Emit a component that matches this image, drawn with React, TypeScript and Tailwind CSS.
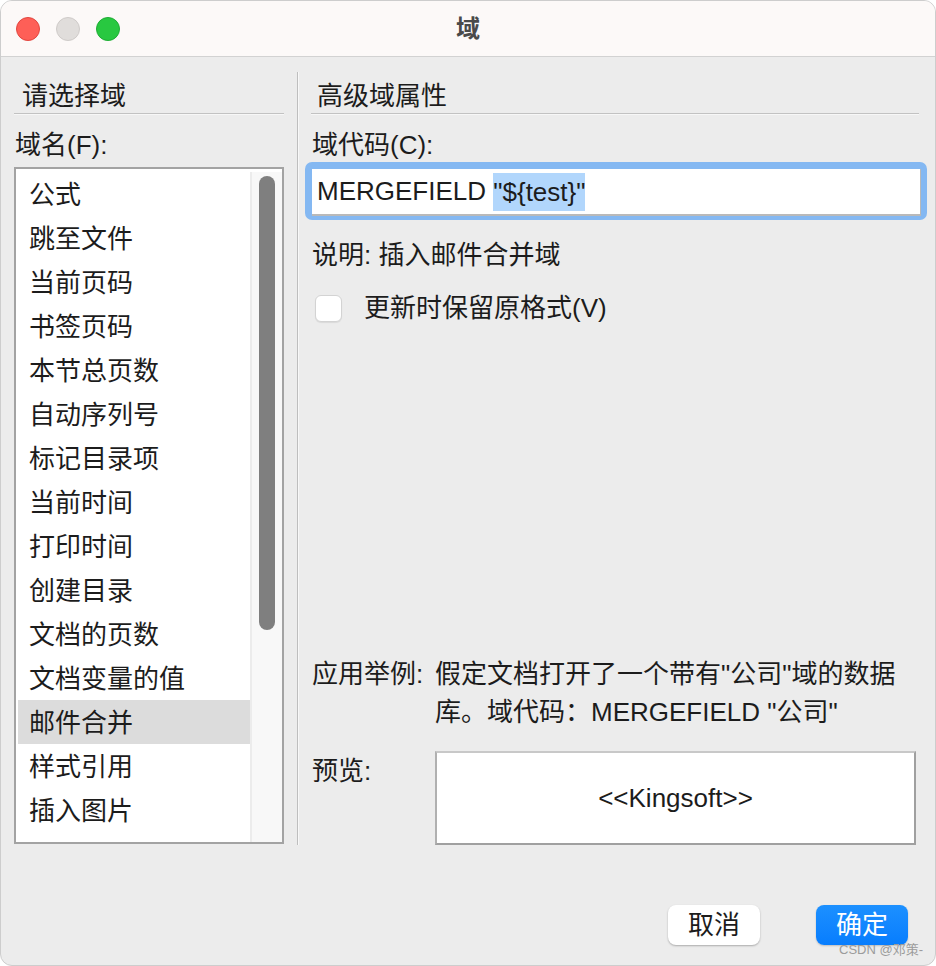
import React from 'react';

const fields = [
  '公式',
  '跳至文件',
  '当前页码',
  '书签页码',
  '本节总页数',
  '自动序列号',
  '标记目录项',
  '当前时间',
  '打印时间',
  '创建目录',
  '文档的页数',
  '文档变量的值',
  '邮件合并',
  '样式引用',
  '插入图片',
];

const SectionTitle: React.FC<{ text: string; indent: string }> = ({ text, indent }) => (
  <div>
    <p className={`h-[30px] leading-[30px] ${indent}`}>{text}</p>
    <div className="mt-[2px] h-px bg-[#c2c2c2]" />
    <div className="h-px bg-[#f7f7f7]" />
  </div>
);

const App: React.FC = () => {
  return (
    <div className="min-h-[966px] bg-white">
      <div className="relative flex h-[966px] w-[936px] flex-col overflow-hidden rounded-[12px] border border-[#cdcdcd] bg-[#ececec] font-['Liberation_Sans','Noto_Sans_CJK_SC',sans-serif] text-[26px] text-[#1c1c1c]">
        {/* Title bar */}
        <div className="relative flex h-[56px] shrink-0 items-center border-b border-[#d2d2d2] bg-[#fcf9f8] pl-[15px]">
          <div className="flex items-center gap-[16px]">
            <span className="h-[24px] w-[24px] rounded-full border border-[#e2463f] bg-[#fe5f57]" />
            <span className="h-[24px] w-[24px] rounded-full border border-[#cfcbc9] bg-[#e0dddb]" />
            <span className="h-[24px] w-[24px] rounded-full border border-[#1ead34] bg-[#28c840]" />
          </div>
          <p className="absolute left-0 right-0 text-center text-[24px] font-bold text-[#4a4a4a]">域</p>
        </div>

        {/* Main area */}
        <div className="flex h-[788px] shrink-0 pt-[15px]">
          {/* Left: field list */}
          <div className="ml-[13px] flex w-[270px] flex-col pt-[9px]">
            <SectionTitle text="请选择域" indent="pl-[8px]" />
            <p className="mt-[15px] h-[30px] pl-[1px] leading-[30px]">域名(F):</p>
            <div className="mt-[7px] flex h-[677px] border-2 border-[#a3a3a3] bg-white pl-[2px] pt-[3px]">
              <ul className="w-[232px] overflow-hidden">
                {fields.map((f) => (
                  <li
                    key={f}
                    className={`h-[44px] pl-[11px] leading-[46px] ${f === '邮件合并' ? 'bg-[#dcdcdc]' : ''}`}
                  >
                    {f}
                  </li>
                ))}
              </ul>
              <div className="flex flex-1 justify-center border-l-2 border-[#ececec] bg-[#f8f8f8] pt-[4px]">
                <div className="h-[454px] w-[16px] rounded-full bg-[#7f7f7f]" />
              </div>
            </div>
          </div>

          {/* Separator */}
          <div className="ml-[13px] flex">
            <div className="w-px bg-[#bebebe]" />
            <div className="w-px bg-[#f8f8f8]" />
          </div>

          {/* Right: properties */}
          <div className="ml-[6px] flex w-[622px] flex-col pt-[9px]">
            <div className="ml-[6px] mr-[8px]">
              <SectionTitle text="高级域属性" indent="pl-[6px]" />
            </div>
            <p className="mt-[15px] h-[30px] pl-[7px] leading-[30px]">域代码(C):</p>
            <div className="mt-[2px] h-[58px] rounded-[7px] bg-[#84b8f2] pb-[4px] pl-[7px] pr-[6px] pt-[7px]">
              <div className="flex h-full items-center border-b-2 border-r border-[#b9b9b9] bg-white pl-[5px]">
                <span className="whitespace-pre">MERGEFIELD </span>
                <span className="bg-[#b1d6fc] leading-[38px]">"${'{'}test{'}'}"</span>
              </div>
            </div>
            <p className="mt-[20px] h-[30px] pl-[7px] leading-[30px]">说明: 插入邮件合并域</p>
            <div className="mt-[23px] flex h-[30px] items-center pl-[10px]">
              <span className="h-[27px] w-[27px] rounded-[6px] border border-[#d3d3d3] bg-white shadow-[0_1px_1px_rgba(0,0,0,0.08)]" />
              <span className="ml-[22px]">更新时保留原格式(V)</span>
            </div>

            <div className="flex-1" />

            <div className="flex pl-[7px] leading-[38px]">
              <p className="w-[123px] shrink-0">应用举例:</p>
              <p className="w-[482px]">假定文档打开了一个带有"公司"域的数据库。域代码：MERGEFIELD "公司"</p>
            </div>
            <div className="mt-[20px] flex pl-[7px]">
              <p className="w-[123px] shrink-0 pt-[1px] leading-[38px]">预览:</p>
              <div className="flex h-[94px] w-[481px] items-center justify-center border-2 border-[#a0a0a0] border-l-[#b0b0b0] border-t-[#c8c8c8] bg-white">
                &lt;&lt;Kingsoft&gt;&gt;
              </div>
            </div>
          </div>
        </div>

        {/* Buttons */}
        <div className="mt-[60px] flex justify-end gap-[56px] pr-[27px]">
          <button className="h-[40px] w-[92px] rounded-[8px] bg-white text-[26px] text-[#1c1c1c] shadow-[0_1px_2px_rgba(0,0,0,0.28)]">
            取消
          </button>
          <button className="h-[40px] w-[92px] rounded-[8px] bg-gradient-to-b from-[#1c90ff] to-[#077dfe] text-[26px] text-white shadow-[0_1px_2px_rgba(0,0,0,0.2)]">
            确定
          </button>
        </div>

        {/* Watermark */}
        <span className="absolute bottom-[6px] right-[12px] text-[13px] text-[#9b9b9b]">CSDN @邓策-</span>
      </div>
    </div>
  );
};

export default App;
